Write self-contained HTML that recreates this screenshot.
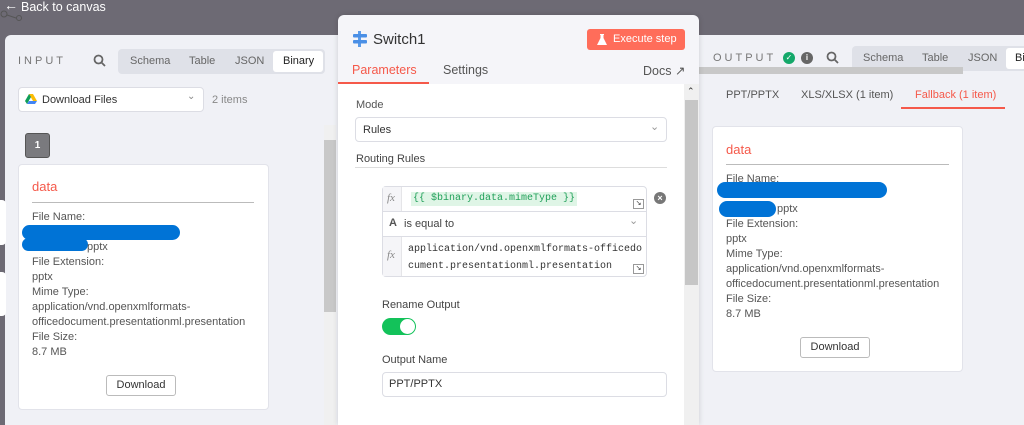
<!DOCTYPE html>
<html><head><meta charset="utf-8"><style>
*{box-sizing:border-box;margin:0;padding:0}
body{width:1024px;height:425px;overflow:hidden;background:#6d6a74;font-family:"Liberation Sans",sans-serif;position:relative;color:#555}
.a{position:absolute}
.t{position:absolute;font-size:11px;color:#555;white-space:nowrap}
.card{position:absolute;background:#fff;border:1px solid #e2e3ea;border-radius:4px}
.blob{position:absolute;background:#0073d6;border-radius:12px}
.btn{position:absolute;border:1px solid #bbb;border-radius:3px;background:#fff;font-size:11px;color:#333;text-align:center;line-height:19px}
.tabs{position:absolute;background:#dfe1e8;border-radius:4px}
.tab{position:absolute;font-size:11px;color:#555;top:0;line-height:22px}
.mono{font-family:"Liberation Mono",monospace}
</style></head><body>
<!-- top canvas -->
<div class="t" style="left:21px;top:0;color:#fff;font-size:12.5px">Back to canvas</div>
<div class="t" style="left:4px;top:-3px;color:#fff;font-size:14px">&#8592;</div>
<svg class="a" style="left:0;top:10px" width="22" height="12" viewBox="0 0 22 12"><circle cx="4" cy="4" r="3" fill="none" stroke="#555" stroke-width="1"/><circle cx="19" cy="8" r="2.5" fill="none" stroke="#555" stroke-width="1"/><path d="M7 5l9 3" stroke="#555"/></svg>
<!-- left panel -->
<div class="a" style="left:5px;top:35px;width:340px;height:390px;background:#f0f1f6;border-radius:6px 0 0 0"></div>
<div class="a" style="left:0;top:200px;width:6px;height:45px;background:#fff;border-radius:0 4px 4px 0"></div>
<div class="a" style="left:0;top:272px;width:6px;height:44px;background:#fff;border-radius:0 4px 4px 0"></div>
<div class="t" style="left:18px;top:55px;letter-spacing:3px;color:#777;font-size:11px">INPUT</div>
<svg class="a" style="left:93px;top:54px" width="13" height="13" viewBox="0 0 13 13"><circle cx="5.5" cy="5.5" r="4" fill="none" stroke="#666" stroke-width="1.8"/><path d="M8.5 8.5L12 12" stroke="#666" stroke-width="1.8"/></svg>
<div class="tabs" style="left:118px;top:49px;width:207px;height:25px"></div>
<div class="tab" style="left:130px;top:50px;color:#666">Schema</div>
<div class="tab" style="left:189px;top:50px;color:#666">Table</div>
<div class="tab" style="left:235px;top:50px;color:#666">JSON</div>
<div class="a" style="left:273px;top:51px;width:50px;height:21px;background:#fff;border-radius:3px"></div>
<div class="tab" style="left:283px;top:50px;color:#222">Binary</div>
<div class="a" style="left:18px;top:87px;width:186px;height:25px;background:#fff;border:1px solid #dcdde4;border-radius:4px"></div>
<svg class="a" style="left:25px;top:94px" width="12" height="10" viewBox="0 0 12 10"><path d="M4 0h4l4 7h-4z" fill="#fbbc04"/><path d="M4 0L0 7l2 3 4-7z" fill="#0f9d58"/><path d="M2 10h8l2-3H4z" fill="#4285f4"/></svg>
<div class="t" style="left:42px;top:94px;color:#333">Download Files</div>
<div class="t" style="left:187px;top:91px;color:#888;font-size:10px">&#8964;</div>
<div class="t" style="left:212px;top:94px;color:#888">2 items</div>
<div class="a" style="left:25px;top:133px;width:25px;height:25px;background:#7a7a7e;border:1px solid #555;border-radius:3px;color:#fff;font-size:10px;font-weight:bold;text-align:center;line-height:23px">1</div>
<div class="a" style="left:324px;top:125px;width:12px;height:300px;background:#f0f0f0"></div>
<div class="a" style="left:324px;top:140px;width:12px;height:172px;background:#c8c8c8"></div>
<div class="card" style="left:18px;top:164px;width:251px;height:246px"></div>
<div class="t" style="left:32px;top:179px;color:#f5594a;font-size:13px">data</div>
<div class="a" style="left:32px;top:202px;width:222px;height:1px;background:#bbb"></div>
<div class="t" style="left:32px;top:211px">File Name:</div>
<div class="blob" style="left:22px;top:225px;width:158px;height:15px"></div>
<div class="blob" style="left:22px;top:238px;width:66px;height:13px"></div>
<div class="t" style="left:87px;top:241px">pptx</div>
<div class="t" style="left:32px;top:256px">File Extension:</div>
<div class="t" style="left:32px;top:271px">pptx</div>
<div class="t" style="left:32px;top:286px">Mime Type:</div>
<div class="t" style="left:32px;top:301px">application/vnd.openxmlformats-</div>
<div class="t" style="left:32px;top:316px">officedocument.presentationml.presentation</div>
<div class="t" style="left:32px;top:331px">File Size:</div>
<div class="t" style="left:32px;top:346px">8.7 MB</div>
<div class="btn" style="left:106px;top:375px;width:70px;height:21px">Download</div>
<!-- output panel -->
<div class="a" style="left:698px;top:35px;width:326px;height:390px;background:#f0f1f6"></div>
<div class="t" style="left:713px;top:52px;letter-spacing:3px;color:#777">OUTPUT</div>
<div class="a" style="left:783px;top:52px;width:12px;height:12px;border-radius:50%;background:#14a86a;color:#fff;font-size:8px;text-align:center;line-height:12px">&#10003;</div>
<div class="a" style="left:801px;top:52px;width:12px;height:12px;border-radius:50%;background:#666;color:#fff;font-size:8px;font-weight:bold;text-align:center;line-height:12px">i</div>
<svg class="a" style="left:826px;top:51px" width="13" height="13" viewBox="0 0 13 13"><circle cx="5.5" cy="5.5" r="4" fill="none" stroke="#666" stroke-width="1.8"/><path d="M8.5 8.5L12 12" stroke="#666" stroke-width="1.8"/></svg>
<div class="tabs" style="left:852px;top:46px;width:180px;height:25px;border-radius:4px 0 0 4px"></div>
<div class="tab" style="left:863px;top:47px;color:#666">Schema</div>
<div class="tab" style="left:922px;top:47px;color:#666">Table</div>
<div class="tab" style="left:968px;top:47px;color:#666">JSON</div>
<div class="a" style="left:1006px;top:48px;width:20px;height:21px;background:#fff;border-radius:3px 0 0 3px"></div>
<div class="tab" style="left:1015px;top:47px;color:#222">Bi</div>
<div class="a" style="left:698px;top:67px;width:265px;height:7px;background:#c8c8c8"></div>
<div class="t" style="left:726px;top:89px">PPT/PPTX</div>
<div class="t" style="left:801px;top:89px">XLS/XLSX (1 item)</div>
<div class="t" style="left:915px;top:89px;color:#f5594a">Fallback (1 item)</div>
<div class="a" style="left:901px;top:107px;width:104px;height:2px;background:#f5594a"></div>
<div class="card" style="left:712px;top:126px;width:251px;height:246px"></div>
<div class="t" style="left:726px;top:142px;color:#f5594a;font-size:13px">data</div>
<div class="a" style="left:726px;top:164px;width:223px;height:1px;background:#bbb"></div>
<div class="t" style="left:726px;top:173px">File Name:</div>
<div class="blob" style="left:717px;top:182px;width:170px;height:16px"></div>
<div class="blob" style="left:719px;top:201px;width:57px;height:16px"></div>
<div class="t" style="left:777px;top:203px">pptx</div>
<div class="t" style="left:726px;top:218px">File Extension:</div>
<div class="t" style="left:726px;top:233px">pptx</div>
<div class="t" style="left:726px;top:248px">Mime Type:</div>
<div class="t" style="left:726px;top:263px">application/vnd.openxmlformats-</div>
<div class="t" style="left:726px;top:278px">officedocument.presentationml.presentation</div>
<div class="t" style="left:726px;top:293px">File Size:</div>
<div class="t" style="left:726px;top:308px">8.7 MB</div>
<div class="btn" style="left:800px;top:337px;width:70px;height:21px">Download</div>
<!-- center panel -->
<div class="a" style="left:338px;top:15px;width:361px;height:410px;background:#f5f5f9;border-radius:6px 6px 0 0;box-shadow:0 0 6px rgba(0,0,0,.15)"></div>
<div class="a" style="left:338px;top:84px;width:361px;height:341px;background:#fff"></div>
<svg class="a" style="left:352px;top:31px" width="16" height="16" viewBox="0 0 16 16"><rect x="6" y="0" width="3" height="16" fill="#5b9be8"/><rect x="1" y="3" width="14" height="3.5" rx="1" fill="#4a8fe6"/><rect x="1" y="9" width="14" height="3.5" rx="1" fill="#4a8fe6"/></svg>
<div class="t" style="left:373px;top:31px;font-size:15px;color:#333">Switch1</div>
<div class="a" style="left:587px;top:29px;width:98px;height:21px;background:#ff6d5a;border-radius:3px;color:#fff;font-size:11px;line-height:21px;padding-left:26px">Execute step</div>
<svg class="a" style="left:597px;top:34px" width="10" height="11" viewBox="0 0 10 11"><path d="M3 0h4v1H6.5v3L10 11H0l3.5-7V1H3z" fill="#fff"/></svg>
<div class="t" style="left:352px;top:63px;font-size:12.5px;color:#f5594a">Parameters</div>
<div class="t" style="left:443px;top:63px;font-size:12.5px;color:#555">Settings</div>
<div class="t" style="left:643px;top:63px;font-size:12.5px;color:#555">Docs &#8599;</div>
<div class="a" style="left:338px;top:82px;width:91px;height:2px;background:#f5594a"></div>
<div class="a" style="left:684px;top:84px;width:15px;height:341px;background:#f0f0f0"></div>
<div class="a" style="left:685px;top:100px;width:13px;height:185px;background:#c6c6c6"></div>
<div class="t" style="left:687px;top:86px;font-size:9px;color:#333">&#8963;</div>
<div class="t" style="left:356px;top:99px">Mode</div>
<div class="a" style="left:355px;top:117px;width:312px;height:25px;border:1px solid #dcdde4;border-radius:4px"></div>
<div class="t" style="left:363px;top:124px;color:#333">Rules</div>
<div class="t" style="left:650px;top:120px;color:#999">&#8964;</div>
<div class="t" style="left:356px;top:153px;color:#444">Routing Rules</div>
<div class="a" style="left:355px;top:167px;width:312px;height:1px;background:#ddd"></div>
<div class="a" style="left:382px;top:186px;width:265px;height:91px;border:1px solid #dcdde4;border-radius:4px;background:#fff"></div>
<div class="a" style="left:383px;top:187px;width:19px;height:24px;background:#f5f5f8;border-right:1px solid #e5e5e8"></div>
<div class="a" style="left:383px;top:237px;width:19px;height:39px;background:#f5f5f8;border-right:1px solid #e5e5e8"></div>
<div class="a" style="left:383px;top:211px;width:263px;height:1px;background:#dcdde4"></div>
<div class="a" style="left:383px;top:236px;width:263px;height:1px;background:#dcdde4"></div>
<div class="t" style="left:387px;top:192px;font-family:'Liberation Serif',serif;font-style:italic;color:#888">fx</div>
<div class="t" style="left:387px;top:249px;font-family:'Liberation Serif',serif;font-style:italic;color:#888">fx</div>
<div class="t mono" style="left:411px;top:192px;background:#dff5e6;color:#22a05a;font-size:10px;line-height:14px;padding:0 2px">{{ $binary.data.mimeType }}</div>
<div class="t" style="left:389px;top:217px;color:#555;font-weight:bold">A</div>
<div class="t" style="left:404px;top:218px;color:#444">is equal to</div>
<div class="t" style="left:629px;top:214px;color:#999">&#8964;</div>
<div class="t mono" style="left:408px;top:241px;color:#333;font-size:10px;line-height:17px">application/vnd.openxmlformats-officedo<br>cument.presentationml.presentation</div>
<div class="a" style="left:633px;top:199px;width:11px;height:10px;border:1px solid #999;font-size:7px;line-height:8px;text-align:center;color:#333">&#8600;</div>
<div class="a" style="left:633px;top:264px;width:11px;height:10px;border:1px solid #999;font-size:7px;line-height:8px;text-align:center;color:#333">&#8600;</div>
<div class="a" style="left:654px;top:192px;width:12px;height:12px;border-radius:50%;background:#777;color:#fff;font-size:9px;line-height:12px;text-align:center;font-weight:bold">&#215;</div>
<div class="t" style="left:382px;top:299px;color:#444">Rename Output</div>
<div class="a" style="left:382px;top:318px;width:34px;height:17px;border-radius:9px;background:#13c25a"></div>
<div class="a" style="left:400px;top:319px;width:15px;height:15px;border-radius:50%;background:#fff"></div>
<div class="t" style="left:382px;top:354px;color:#444">Output Name</div>
<div class="a" style="left:382px;top:372px;width:285px;height:25px;border:1px solid #dcdde4;border-radius:4px"></div>
<div class="t" style="left:389px;top:378px;color:#333">PPT/PPTX</div>
</body></html>
